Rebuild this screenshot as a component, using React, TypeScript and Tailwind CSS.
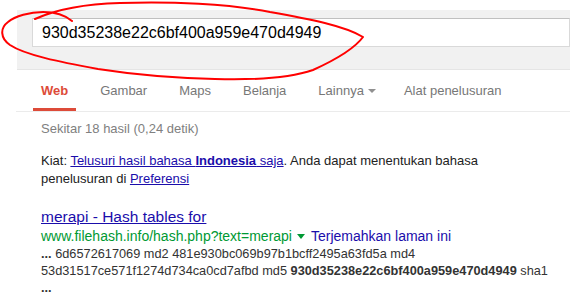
import { ReactNode } from 'react'

const TABS = ['Web', 'Gambar', 'Maps', 'Belanja', 'Lainnya', 'Alat penelusuran']

function Tab({ label, active }: { label: string; active?: boolean }) {
  return (
    <div
      className={
        active
          ? 'flex h-[41px] items-center border-b-[3px] border-[#dd4b39] px-2 pt-[3px] font-bold text-[#dd4b39]'
          : label === 'Lainnya'
            ? 'flex h-[41px] items-center border-b-[3px] border-transparent pl-2 pr-[4px] pt-[3px] text-[#777]'
            : 'flex h-[41px] items-center border-b-[3px] border-transparent px-2 pt-[3px] text-[#777]'
      }
    >
      {label}
      {label === 'Lainnya' && (
        <span className="ml-[4px] mt-[1px] h-0 w-0 border-x-[4px] border-t-[4px] border-x-transparent border-t-[#909090]" />
      )}
    </div>
  )
}

function Link({ children }: { children: ReactNode }) {
  return <a className="text-[#1a0dab] underline">{children}</a>
}

export default function App() {
  return (
    <div className="relative h-[293px] w-[570px] overflow-hidden bg-white font-['Liberation_Sans',Arial,sans-serif]">
      {/* Search header */}
      <div className="ml-[17px] mt-[10px] h-[60px] border-b border-[#e5e5e5] bg-[#f1f1f1] pl-[15px] pt-[8px]">
        <div className="flex h-[29px] items-center border border-[#d9d9d9] border-t-[#c0c0c0] bg-white pl-[9px] text-[16px] text-black">
          930d35238e22c6bf400a959e470d4949
        </div>
      </div>

      {/* Tabs */}
      <div className="ml-[16px] flex gap-[16px] border-b border-[#ebebeb] pl-[17px] text-[13px]">
        {TABS.map((t, i) => (
          <Tab key={t} label={t} active={i === 0} />
        ))}
      </div>

      {/* Results */}
      <div className="pl-[41px]">
        <div className="mt-[8px] text-[13px] leading-[18px] text-[#808080]">Sekitar 18 hasil (0,24 detik)</div>

        <div className="mt-[14px] w-[470px] text-[13px] leading-[18px] text-[#222]">
          Kiat: <Link>Telusuri hasil bahasa <b>Indonesia</b> saja</Link>. Anda dapat menentukan bahasa penelusuran di{' '}
          <Link>Preferensi</Link>
        </div>

        <div className="mt-[19px]">
          <a className="block text-[15.5px] leading-[20px] text-[#1a0dab] underline">merapi - Hash tables for</a>
          <div className="flex items-center text-[14px] leading-[18px]">
            <span className="text-[#009933]">www.filehash.info/hash.php?text=merapi</span>
            <span className="ml-[5px] mr-[6px] mt-[1px] h-0 w-0 border-x-[4px] border-t-[5px] border-x-transparent border-t-[#009933]" />
            <a className="text-[#1a0dab]">Terjemahkan laman ini</a>
          </div>
          <div className="whitespace-nowrap text-[12.75px] leading-[17px] text-[#333]">
            <b>...</b> 6d6572617069 md2 481e930bc069b97b1bcff2495a63fd5a md4
            <br />
            53d31517ce571f1274d734ca0cd7afbd md5 <b>930d35238e22c6bf400a959e470d4949</b> sha1
            <br />
            <b>...</b>
          </div>
        </div>
      </div>

      {/* hand-drawn red circle */}
      <svg className="pointer-events-none absolute left-0 top-0" width="570" height="100" viewBox="0 0 570 100">
        <path
          d="M35,19 C55,10 80,4 120,3 C170,1 230,4 270,12 C310,19 345,26 363,37 C355,48 335,60 313,70 C290,78 250,80 215,79 C175,78 130,74 98,69 C60,62 25,55 10,45 C0,38 0,28 8,22 C15,16 30,12 43,12 C55,12 65,15 72,21"
          fill="none"
          stroke="#ff0000"
          strokeWidth="2"
          strokeLinecap="round"
          strokeLinejoin="round"
        />
      </svg>
    </div>
  )
}
